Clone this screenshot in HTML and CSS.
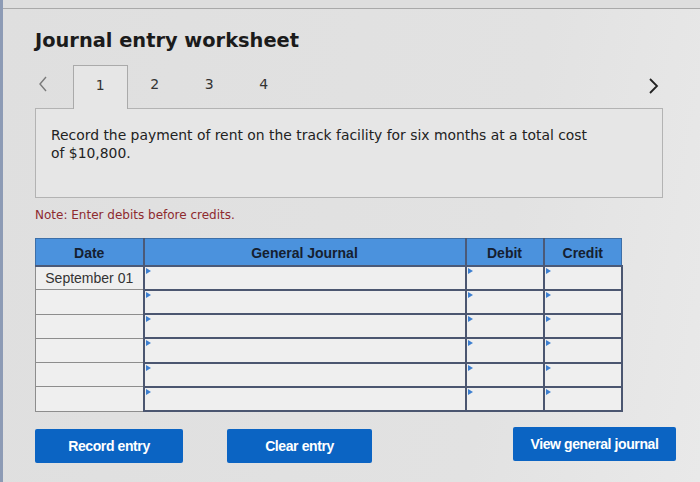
FILE: index.html
```html
<!doctype html>
<html>
  <head>
    <title>Journal entry worksheet</title>
    <meta name="viewport" content="initial-scale=1">
<link rel="stylesheet" href="styles.css">
  </head>
  <body>
    <div class=page>
      <h1>Journal entry worksheet</h1>

      <div class=tabs>
        <span class="arrow prev"><svg width="10" height="16" viewBox="0 0 10 16"><polyline points="8,1 2,8 8,15" fill="none" stroke="#7a7a7a" stroke-width="1.4"/></svg></span>
        <span class="tab on">1</span>
        <span class=tab>2</span>
        <span class=tab>3</span>
        <span class=tab>4</span>
        <span class="arrow next"><svg width="12" height="16" viewBox="0 0 12 16"><polyline points="2,1 9,8 2,15" fill="none" stroke="#222" stroke-width="1.8"/></svg></span>
      </div>

      <div class=question>
        <p>Record the payment of rent on the track facility for six months at a total cost of $10,800.</p>
      </div>

      <p class=note>Note: Enter debits before credits.</p>

      <table class=journal>
        <tr>
          <th class=date>Date</th>
          <th class=acct>General Journal</th>
          <th class=amt>Debit</th>
          <th class=amt>Credit</th>
        </tr>
        <tr>
          <td class=date>September 01</td>
          <td class=in></td><td class=in></td><td class=in></td>
        </tr>
        <tr><td class=date></td><td class=in></td><td class=in></td><td class=in></td></tr>
        <tr><td class=date></td><td class=in></td><td class=in></td><td class=in></td></tr>
        <tr><td class=date></td><td class=in></td><td class=in></td><td class=in></td></tr>
        <tr><td class=date></td><td class=in></td><td class=in></td><td class=in></td></tr>
        <tr><td class=date></td><td class=in></td><td class=in></td><td class=in></td></tr>
      </table>

      <div class=buttons>
        <button class=record>Record entry</button>
        <button class=clear>Clear entry</button>
        <button class=view>View general journal</button>
      </div>
    </div>
  </body>
</html>
```

FILE: styles.css
```css
* {
  box-sizing: border-box;
  margin: 0;
  padding: 0;
}

html, body {
  height: 100%;
  background: #dedede;
}

body {
  padding-top: 8px;
  border-left: 3px solid #8d9bb5;
  font-family: "DejaVu Sans", Verdana, sans-serif;
  color: #222;
}

.page {
  height: 100%;
  border-top: 1px solid #a9a9a9;
  background: linear-gradient(100deg, #dfdfdf 0%, #e2e2e2 70%, #e9e9e9 100%);
  padding: 0 0 0 32px;
}

h1 {
  font-size: 19.4px;
  line-height: 24px;
  padding-top: 20px;
  color: #1b1b1b;
}

.tabs {
  display: flex;
  align-items: flex-end;
  width: 628px;
  height: 55px;
  padding-top: 13px;
}

.tabs span {
  height: 44px;
  display: flex;
  align-items: center;
  justify-content: center;
  font-size: 14px;
  color: #333;
}

.arrow {
  width: 38px;
  padding-bottom: 4px;
}

.arrow.prev {
  justify-content: flex-start;
  padding-left: 3px;
}

.arrow.next {
  margin-left: auto;
  width: 18px;
  padding-bottom: 0;
}

.tab {
  width: 54.5px;
  padding-bottom: 4px;
}

.tab.on {
  border: 1px solid #aaa;
  border-bottom: none;
  background: #e6e6e6;
  position: relative;
  top: 1px;
  padding-bottom: 6px;
}

.question {
  width: 628px;
  height: 90px;
  border: 1px solid #b3b3b3;
  background: #e6e6e6;
  padding: 17px 15px 15px;
}

.question p {
  font-size: 13.9px;
  line-height: 18px;
  width: 545px;
  color: #222;
}

.note {
  font-size: 12px;
  color: #8e2a2f;
  margin-top: 10px;
  line-height: 14px;
}

.journal {
  margin-top: 16px;
  border-collapse: collapse;
  font-family: "Liberation Sans", Arial, sans-serif;
  font-size: 14px;
}

.journal th {
  height: 27px;
  padding-top: 2px;
  background: #4b92dd;
  color: #152030;
  border: 1px solid #3d6fa8;
  border-bottom: 2px solid #4b5a78;
}

.journal th.date { width: 108px; }
.journal th.acct { width: 322px; }
.journal th.amt { width: 78px; }

.journal th + th {
  border-left: 2px solid #4b5a78;
}

.journal td {
  height: 24.3px;
  background: #efefef;
}

.journal td.date {
  border: 1px solid #8d8d8d;
  color: #333;
  text-align: center;
}

.journal td.in {
  border: 2.5px solid #4b5670;
  position: relative;
}

.journal td.in::before {
  content: "";
  position: absolute;
  left: 1px;
  top: 1px;
  border-left: 5px solid #3d7fd0;
  border-top: 3px solid transparent;
  border-bottom: 3px solid transparent;
}

.buttons {
  display: flex;
  align-items: flex-start;
  gap: 44px;
  margin-top: 17px;
  width: 641px;
}

.buttons button {
  height: 34px;
  border: none;
  border-radius: 2px;
  background: #0b64c3;
  color: #fff;
  font: bold 14px "Liberation Sans", Arial, sans-serif;
  letter-spacing: -0.4px;
}

.record { width: 148px; }
.clear { width: 145px; }

.view {
  width: 163px;
  margin-left: auto;
  position: relative;
  top: -2px;
}
```
